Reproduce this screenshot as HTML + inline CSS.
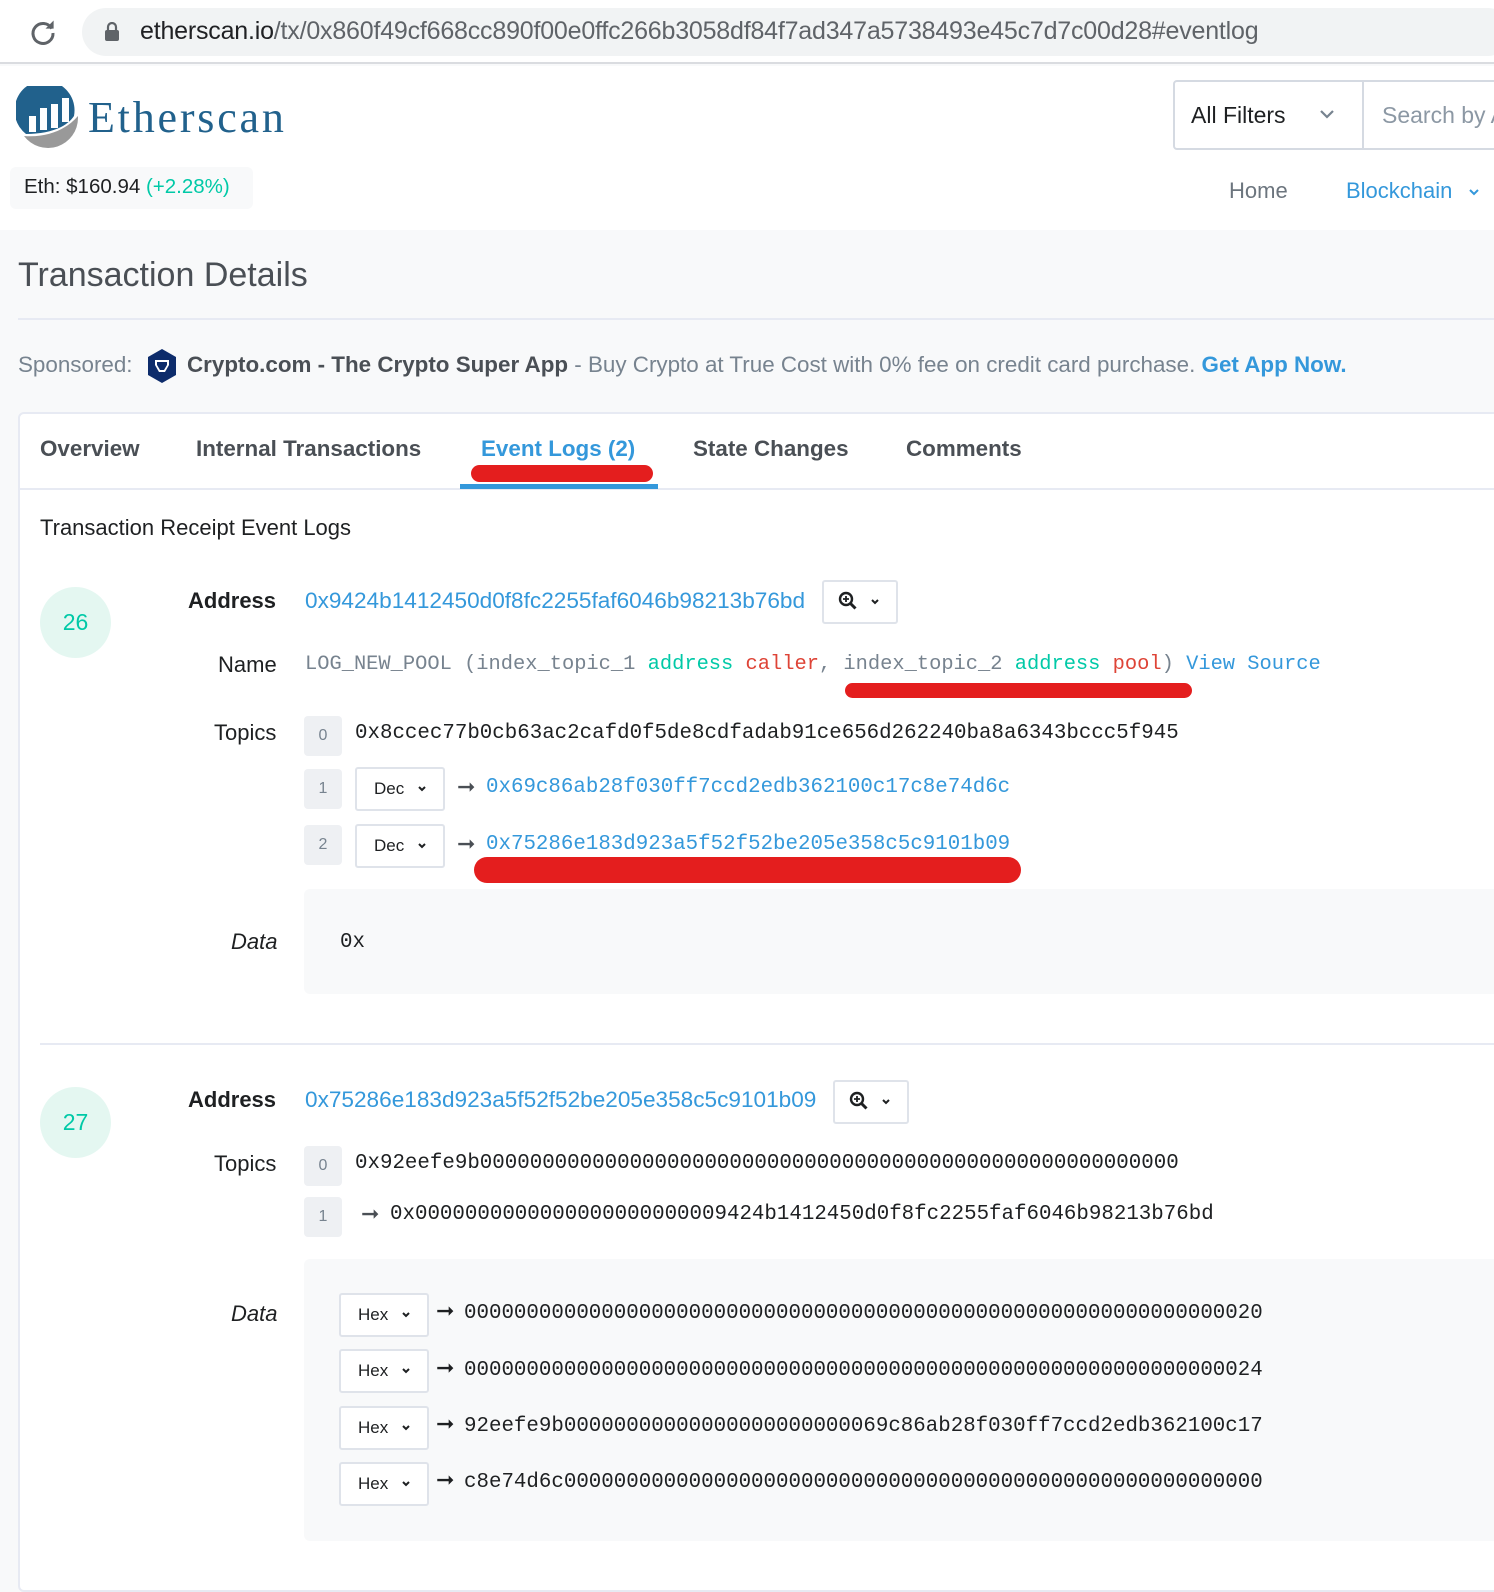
<!DOCTYPE html>
<html><head><meta charset="utf-8"><style>
*{box-sizing:border-box;margin:0;padding:0}
body{width:1494px;height:1571px;overflow:hidden;background:#f8f9fa;font-family:"Liberation Sans",Arial,sans-serif;position:relative;color:#1e2022}
.a{position:absolute;white-space:nowrap}
.m{font-family:"Liberation Mono",monospace;font-size:20.8px;letter-spacing:0}
.lbl{font-size:22px;color:#1e2022}
.blue{color:#3498db}
.idx{width:38px;height:40px;background:#eef0f3;border-radius:4px;color:#77838f;font-size:16px;text-align:center;line-height:40px}
.sel{border:2px solid #dfe3ea;background:#fff;border-radius:3px;font-size:17px;color:#1e2022}
.circ{width:71px;height:71px;border-radius:50%;background:#e4f7f1;color:#00c9a7;font-size:23px;text-align:center;line-height:71px}
.red{background:#e41e1e;border-radius:12px}
.arr{color:#4a4f55}
</style></head><body>
<div class="a" style="left:0;top:0;width:1494px;height:64px;background:#fff;border-bottom:2px solid #dadce0"></div>
<svg class="a" style="left:28px;top:18px" width="30" height="30" viewBox="0 0 24 24"><path d="M19 8.5A8 8 0 1 0 20 12" fill="none" stroke="#5f6368" stroke-width="2.4"/><path d="M14 8.5h6.5V2z" fill="#5f6368"/></svg>
<div class="a" style="left:82px;top:8px;width:1430px;height:48px;background:#f1f3f4;border-radius:24px"></div>
<svg class="a" style="left:104px;top:22px" width="16" height="20" viewBox="0 0 16 20"><rect x="1" y="8" width="14" height="11" rx="2" fill="#5f6368"/><path d="M4 9V5a4 4 0 0 1 8 0v4" fill="none" stroke="#5f6368" stroke-width="2.2"/></svg>
<div class="a" style="left:140px;top:17px;font-size:25px;color:#5f6368;letter-spacing:-0.2px"><span style="color:#202124">etherscan.io</span>/tx/0x860f49cf668cc890f00e0ffc266b3058df84f7ad347a5738493e45c7d7c00d28#eventlog</div>
<div class="a" style="left:0;top:66px;width:1494px;height:164px;background:#fff"></div>
<svg class="a" style="left:16px;top:86px" width="64" height="64" viewBox="0 0 64 64"><path d="M62 32A30 30 0 0 1 8 50C30 52 50 44 62 30z" fill="#999"/><path d="M58 30C50 42 32 48 10 48A30 30 0 1 1 58 30z" fill="#21618c"/><g fill="#fff"><rect x="13" y="30" width="7" height="16"/><rect x="24" y="22" width="7" height="22"/><rect x="35" y="18" width="7" height="24"/><rect x="46" y="12" width="7" height="24"/></g></svg>
<div class="a" style="left:88px;top:92px;font-family:'Liberation Serif',serif;font-size:44px;color:#21618c;letter-spacing:2.8px">Etherscan</div>
<div class="a" style="left:10px;top:167px;width:243px;height:42px;background:#f8f9fa;border-radius:6px"></div>
<div class="a" style="left:24px;top:175px;font-size:20.5px">Eth: $160.94 <span style="color:#00c9a7">(+2.28%)</span></div>
<div class="a" style="left:1173px;top:80px;width:340px;height:70px;border:2px solid #d5dae2;border-radius:4px;background:#fff"></div>
<div class="a" style="left:1362px;top:81px;width:2px;height:68px;background:#d5dae2"></div>
<div class="a" style="left:1191px;top:102px;font-size:23px">All Filters</div>
<svg class="a" style="left:1318px;top:108px" width="18" height="12" viewBox="0 0 18 12"><path d="M3 3l6 6 6-6" fill="none" stroke="#77838f" stroke-width="2.2"/></svg>
<div class="a" style="left:1382px;top:102px;font-size:23px;color:#8c98a4">Search by A</div>
<div class="a" style="left:1229px;top:178px;font-size:22px;color:#6c757e">Home</div>
<div class="a" style="left:1346px;top:178px;font-size:22px;color:#3498db">Blockchain</div>
<svg class="a" style="left:1468px;top:187px" width="12" height="10" viewBox="0 0 12 10"><path d="M2 3l4 4 4-4" fill="none" stroke="#3498db" stroke-width="2"/></svg>
<div class="a" style="left:18px;top:256px;font-size:34px;color:#4a4f55">Transaction Details</div>
<div class="a" style="left:18px;top:318px;width:1476px;height:2px;background:#e7eaf3"></div>
<div class="a" style="left:18px;top:352px;font-size:22.4px;color:#77838f">Sponsored:</div>
<svg class="a" style="left:146px;top:348px" width="32" height="36" viewBox="0 0 32 36"><path d="M16 1L30 9v18L16 35 2 27V9z" fill="#0d2c6b"/><path d="M9 12h14v5l-4 7h-6l-4-7z" fill="#fff"/><path d="M11 14h10v3l-3 5h-4l-3-5z" fill="#0d2c6b"/></svg>
<div class="a" style="left:187px;top:352px;font-size:22.4px;color:#77838f"><b style="color:#4a4f55">Crypto.com - The Crypto Super App</b> - Buy Crypto at True Cost with 0% fee on credit card purchase. <b style="color:#3498db">Get App Now.</b></div>
<div class="a" style="left:18px;top:412px;width:1500px;height:1180px;background:#fff;border:2px solid #e7eaf3;border-radius:6px"></div>
<div class="a" style="left:20px;top:488px;width:1474px;height:2px;background:#e7eaf3"></div>
<div class="a" style="left:40px;top:436px;font-size:22.4px;font-weight:bold;color:#4a4f55">Overview</div>
<div class="a" style="left:196px;top:436px;font-size:22.4px;font-weight:bold;color:#4a4f55">Internal Transactions</div>
<div class="a" style="left:481px;top:436px;font-size:22.4px;font-weight:bold;color:#3498db">Event Logs (2)</div>
<div class="a" style="left:693px;top:436px;font-size:22.4px;font-weight:bold;color:#4a4f55">State Changes</div>
<div class="a" style="left:906px;top:436px;font-size:22.4px;font-weight:bold;color:#4a4f55">Comments</div>
<div class="a" style="left:460px;top:484px;width:198px;height:5px;background:#3498db"></div>
<div class="a red" style="left:471px;top:465px;width:182px;height:17px"></div>
<div class="a" style="left:40px;top:515px;font-size:22px;color:#1e2022">Transaction Receipt Event Logs</div>
<div class="a circ" style="left:40px;top:587px">26</div>
<div class="a lbl" style="left:188px;top:588px;font-weight:bold">Address</div>
<div class="a blue" style="left:305px;top:588px;font-size:22.6px">0x9424b1412450d0f8fc2255faf6046b98213b76bd</div>
<div class="a sel" style="left:822px;top:580px;width:76px;height:44px"></div>
<svg class="a" style="left:838px;top:591px" width="20" height="20" viewBox="0 0 20 20"><circle cx="8" cy="8" r="6" fill="none" stroke="#1e2022" stroke-width="2.4"/><path d="M12.5 12.5l5 5" stroke="#1e2022" stroke-width="3"/><path d="M5 8h6M8 5v6" stroke="#1e2022" stroke-width="1.8"/></svg>
<svg class="a" style="left:869px;top:597px" width="12" height="10" viewBox="0 0 12 10"><path d="M3 3l3 3 3-3" fill="none" stroke="#1e2022" stroke-width="2"/></svg>
<div class="a lbl" style="left:218px;top:652px">Name</div>
<div class="a m" style="left:305px;top:653px;color:#77838f;font-size:20.4px">LOG_NEW_POOL (index_topic_1 <span style="color:#00c9a7">address</span> <span style="color:#de4437">caller</span>, index_topic_2 <span style="color:#00c9a7">address</span> <span style="color:#de4437">pool</span>) <span class="blue">View Source</span></div>
<div class="a red" style="left:845px;top:683px;width:347px;height:15px"></div>
<div class="a lbl" style="left:214px;top:720px">Topics</div>
<div class="a idx" style="left:304px;top:716px">0</div>
<div class="a m" style="left:355px;top:722px">0x8ccec77b0cb63ac2cafd0f5de8cdfadab91ce656d262240ba8a6343bccc5f945</div>
<div class="a idx" style="left:304px;top:769px">1</div>
<div class="a sel" style="left:355px;top:767px;width:90px;height:44px"></div>
<div class="a" style="left:374px;top:779px;font-size:17px">Dec</div>
<svg class="a" style="left:416px;top:784px" width="12" height="10" viewBox="0 0 12 10"><path d="M3 3l3 3 3-3" fill="none" stroke="#1e2022" stroke-width="2"/></svg>
<div class="a arr" style="left:457px;top:774px;font-size:22px">➞</div>
<div class="a m blue" style="left:486px;top:776px">0x69c86ab28f030ff7ccd2edb362100c17c8e74d6c</div>
<div class="a idx" style="left:304px;top:825px">2</div>
<div class="a sel" style="left:355px;top:824px;width:90px;height:44px"></div>
<div class="a" style="left:374px;top:836px;font-size:17px">Dec</div>
<svg class="a" style="left:416px;top:841px" width="12" height="10" viewBox="0 0 12 10"><path d="M3 3l3 3 3-3" fill="none" stroke="#1e2022" stroke-width="2"/></svg>
<div class="a arr" style="left:457px;top:831px;font-size:22px">➞</div>
<div class="a m blue" style="left:486px;top:833px">0x75286e183d923a5f52f52be205e358c5c9101b09</div>
<div class="a red" style="left:474px;top:857px;width:547px;height:26px;border-radius:13px"></div>
<div class="a lbl" style="left:231px;top:929px;font-style:italic">Data</div>
<div class="a" style="left:304px;top:889px;width:1200px;height:105px;background:#f8f9fa;border-radius:6px"></div>
<div class="a m" style="left:340px;top:931px">0x</div>
<div class="a" style="left:40px;top:1043px;width:1454px;height:2px;background:#e7eaf3"></div>
<div class="a circ" style="left:40px;top:1087px">27</div>
<div class="a lbl" style="left:188px;top:1087px;font-weight:bold">Address</div>
<div class="a blue" style="left:305px;top:1087px;font-size:22.6px">0x75286e183d923a5f52f52be205e358c5c9101b09</div>
<div class="a sel" style="left:833px;top:1080px;width:76px;height:44px"></div>
<svg class="a" style="left:849px;top:1091px" width="20" height="20" viewBox="0 0 20 20"><circle cx="8" cy="8" r="6" fill="none" stroke="#1e2022" stroke-width="2.4"/><path d="M12.5 12.5l5 5" stroke="#1e2022" stroke-width="3"/><path d="M5 8h6M8 5v6" stroke="#1e2022" stroke-width="1.8"/></svg>
<svg class="a" style="left:880px;top:1097px" width="12" height="10" viewBox="0 0 12 10"><path d="M3 3l3 3 3-3" fill="none" stroke="#1e2022" stroke-width="2"/></svg>
<div class="a lbl" style="left:214px;top:1151px">Topics</div>
<div class="a idx" style="left:304px;top:1146px">0</div>
<div class="a m" style="left:355px;top:1152px">0x92eefe9b00000000000000000000000000000000000000000000000000000000</div>
<div class="a idx" style="left:304px;top:1197px">1</div>
<div class="a arr" style="left:361px;top:1201px;font-size:22px">➞</div>
<div class="a m" style="left:390px;top:1203px">0x0000000000000000000000009424b1412450d0f8fc2255faf6046b98213b76bd</div>
<div class="a" style="left:304px;top:1259px;width:1200px;height:282px;background:#f8f9fa;border-radius:6px"></div>
<div class="a lbl" style="left:231px;top:1301px;font-style:italic">Data</div>
<div class="a sel" style="left:339px;top:1293px;width:90px;height:44px"></div><div class="a" style="left:358px;top:1305px;font-size:17px">Hex</div><svg class="a" style="left:400px;top:1310px" width="12" height="10" viewBox="0 0 12 10"><path d="M3 3l3 3 3-3" fill="none" stroke="#1e2022" stroke-width="2"/></svg>
<div class="a" style="left:436px;top:1298px;font-size:22px">➞</div><div class="a m" style="left:464px;top:1302px">0000000000000000000000000000000000000000000000000000000000000020</div>
<div class="a sel" style="left:339px;top:1349px;width:90px;height:44px"></div><div class="a" style="left:358px;top:1361px;font-size:17px">Hex</div><svg class="a" style="left:400px;top:1366px" width="12" height="10" viewBox="0 0 12 10"><path d="M3 3l3 3 3-3" fill="none" stroke="#1e2022" stroke-width="2"/></svg>
<div class="a" style="left:436px;top:1355px;font-size:22px">➞</div><div class="a m" style="left:464px;top:1359px">0000000000000000000000000000000000000000000000000000000000000024</div>
<div class="a sel" style="left:339px;top:1406px;width:90px;height:44px"></div><div class="a" style="left:358px;top:1418px;font-size:17px">Hex</div><svg class="a" style="left:400px;top:1423px" width="12" height="10" viewBox="0 0 12 10"><path d="M3 3l3 3 3-3" fill="none" stroke="#1e2022" stroke-width="2"/></svg>
<div class="a" style="left:436px;top:1411px;font-size:22px">➞</div><div class="a m" style="left:464px;top:1415px">92eefe9b00000000000000000000000069c86ab28f030ff7ccd2edb362100c17</div>
<div class="a sel" style="left:339px;top:1462px;width:90px;height:44px"></div><div class="a" style="left:358px;top:1474px;font-size:17px">Hex</div><svg class="a" style="left:400px;top:1479px" width="12" height="10" viewBox="0 0 12 10"><path d="M3 3l3 3 3-3" fill="none" stroke="#1e2022" stroke-width="2"/></svg>
<div class="a" style="left:436px;top:1467px;font-size:22px">➞</div><div class="a m" style="left:464px;top:1471px">c8e74d6c00000000000000000000000000000000000000000000000000000000</div>
</body></html>
